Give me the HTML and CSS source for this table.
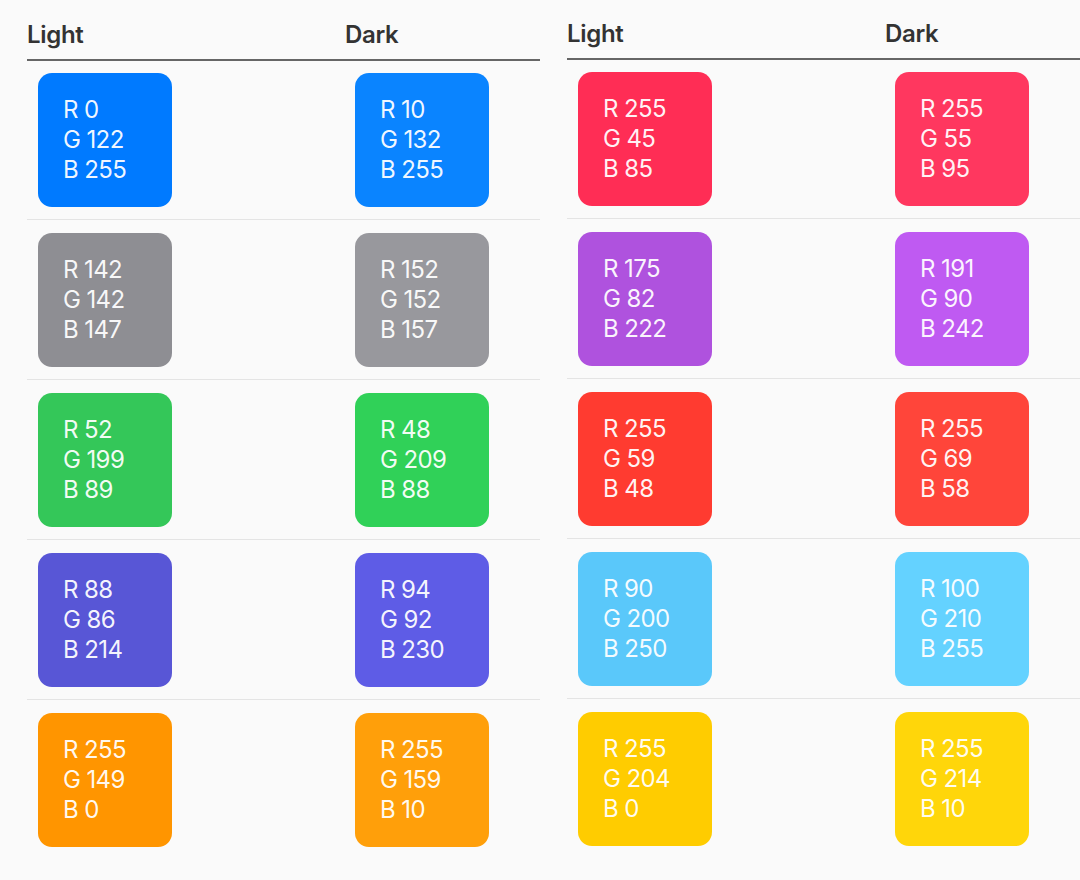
FILE: index.html
```html
<!DOCTYPE html>
<html>
<head>
<meta charset="utf-8">
<link rel="stylesheet" href="styles.css">
</head>
<body>
<div class="page">
  <section class="panel">
    <div class="head"><span>Light</span><span>Dark</span></div>
    <div class="row">
      <div class="sw" style="background:rgb(0,122,255)">R 0<br>G 122<br>B 255</div>
      <div class="sw" style="background:rgb(10,132,255)">R 10<br>G 132<br>B 255</div>
    </div>
    <div class="row">
      <div class="sw" style="background:rgb(142,142,147)">R 142<br>G 142<br>B 147</div>
      <div class="sw" style="background:rgb(152,152,157)">R 152<br>G 152<br>B 157</div>
    </div>
    <div class="row">
      <div class="sw" style="background:rgb(52,199,89)">R 52<br>G 199<br>B 89</div>
      <div class="sw" style="background:rgb(48,209,88)">R 48<br>G 209<br>B 88</div>
    </div>
    <div class="row">
      <div class="sw" style="background:rgb(88,86,214)">R 88<br>G 86<br>B 214</div>
      <div class="sw" style="background:rgb(94,92,230)">R 94<br>G 92<br>B 230</div>
    </div>
    <div class="row last">
      <div class="sw" style="background:rgb(255,149,0)">R 255<br>G 149<br>B 0</div>
      <div class="sw" style="background:rgb(255,159,10)">R 255<br>G 159<br>B 10</div>
    </div>
  </section>
  <section class="panel right">
    <div class="head"><span>Light</span><span>Dark</span></div>
    <div class="row">
      <div class="sw" style="background:rgb(255,45,85)">R 255<br>G 45<br>B 85</div>
      <div class="sw" style="background:rgb(255,55,95)">R 255<br>G 55<br>B 95</div>
    </div>
    <div class="row">
      <div class="sw" style="background:rgb(175,82,222)">R 175<br>G 82<br>B 222</div>
      <div class="sw" style="background:rgb(191,90,242)">R 191<br>G 90<br>B 242</div>
    </div>
    <div class="row">
      <div class="sw" style="background:rgb(255,59,48)">R 255<br>G 59<br>B 48</div>
      <div class="sw" style="background:rgb(255,69,58)">R 255<br>G 69<br>B 58</div>
    </div>
    <div class="row">
      <div class="sw" style="background:rgb(90,200,250)">R 90<br>G 200<br>B 250</div>
      <div class="sw" style="background:rgb(100,210,255)">R 100<br>G 210<br>B 255</div>
    </div>
    <div class="row last">
      <div class="sw" style="background:rgb(255,204,0)">R 255<br>G 204<br>B 0</div>
      <div class="sw" style="background:rgb(255,214,10)">R 255<br>G 214<br>B 10</div>
    </div>
  </section>
</div>
</body>
</html>
```
FILE: styles.css
```css
html, body {
  margin: 0;
  padding: 0;
  background: #fafafa;
  width: 1080px;
  height: 880px;
  overflow: hidden;
}
.page {
  display: flex;
  gap: 27px;
  padding-left: 27px;
  font-family: Inter, "Liberation Sans", sans-serif;
}
.panel {
  flex: 0 0 513px;
  width: 513px;
}
.right {
  margin-top: -1px;
}
.head {
  display: grid;
  grid-template-columns: 318px 1fr;
  height: 61px;
  box-sizing: border-box;
  padding-top: 20px;
  border-bottom: 2px solid #666;
  font-size: 24px;
  line-height: 30px;
  font-weight: 600;
  color: #333;
}
.head span {
  letter-spacing: -0.3px;
}
.row {
  display: grid;
  grid-template-columns: 317px 1fr;
  padding: 13px 0 12px 11px;
  border-bottom: 1px solid #e4e4e4;
}
.head + .row {
  padding-top: 12px;
}
.row.last {
  border-bottom: none;
}
.sw {
  width: 134px;
  height: 134px;
  box-sizing: border-box;
  border-radius: 14px;
  padding: 22px 0 0 25px;
  color: rgba(255, 255, 255, 0.95);
  font-size: 24px;
  line-height: 30px;
  font-weight: 400;
  letter-spacing: -0.6px;
}
```
